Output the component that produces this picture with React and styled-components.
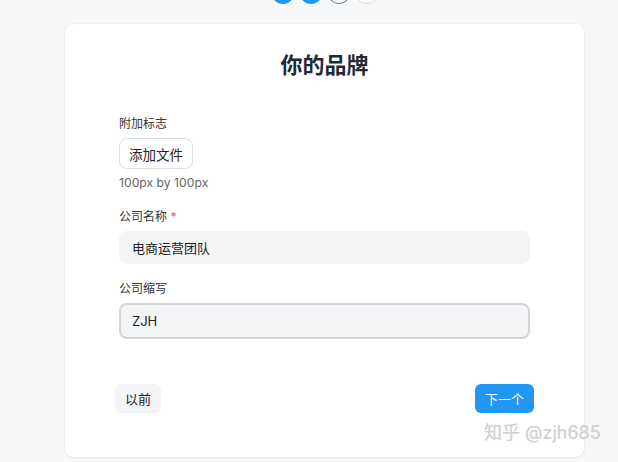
import React, {useState} from "react";
import styled, {createGlobalStyle} from 'styled-components'

const GlobalStyle = createGlobalStyle`
    html, body {
        margin: 0;
        background: #f7f8fa;
        font-family: Inter, "Noto Sans CJK SC", sans-serif;
        color: #1f2937;
        overflow: hidden;
    }
`;

const steps = ['done', 'done', 'current', 'todo'];

export default function App() {
    const [company, setCompany] = useState("电商运营团队");
    const [short, setShort] = useState("ZJH");

    return <Page>
        <GlobalStyle/>
        <Stepper>
            {steps.map((s, i) => <Dot key={i} state={s}/>)}
        </Stepper>
        <Card>
            <Title>你的品牌</Title>
            <Form>
                <Field>
                    <Label>附加标志</Label>
                    <FileButton>添加文件</FileButton>
                    <Hint>100px by 100px</Hint>
                </Field>
                <Field>
                    <Label>公司名称 <Required>*</Required></Label>
                    <Input value={company} onChange={e => setCompany(e.target.value)}/>
                </Field>
                <Field>
                    <Label>公司缩写</Label>
                    <Input focused value={short} onChange={e => setShort(e.target.value)}/>
                </Field>
            </Form>
            <Footer>
                <NavButton>以前</NavButton>
                <NavButton primary>下一个</NavButton>
            </Footer>
        </Card>
        <Watermark>知乎 @zjh685</Watermark>
    </Page>
}

const Page = styled.div`
    position: relative;
    display: flow-root;
    width: 618px;
    height: 462px;
`;

const Stepper = styled.div`
    display: flex;
    justify-content: center;
    gap: 4px;
    width: 519px;
    margin: -20px 0 0 65px;
`;

const Dot = styled.div`
    width: 24px;
    height: 24px;
    box-sizing: border-box;
    border-radius: 50%;
    background: ${p => p.state === 'done' ? '#2196f3' : '#fff'};
    border: 1px solid ${p => p.state === 'done' ? '#2196f3' : p.state === 'current' ? '#64748b' : '#d8dbe0'};
`;

const Card = styled.div`
    width: 519px;
    box-sizing: border-box;
    margin: 20px 0 0 65px;
    padding: 26px 50px 44px;
    background: #fff;
    border-radius: 8px;
    box-shadow: 0 0 3px rgba(0, 0, 0, 0.08), 0 1px 2px rgba(0, 0, 0, 0.05);
`;

const Title = styled.h1`
    margin: 0;
    text-align: center;
    font-size: 22px;
    line-height: 30px;
    font-weight: 700;
    color: #1f2937;
`;

const Form = styled.div`
    display: flex;
    flex-direction: column;
    gap: 16px;
    margin: 35px 4px 0;
`;

const Field = styled.div`
    display: flex;
    flex-direction: column;
    align-items: flex-start;
    gap: 5px;
`;

const Label = styled.label`
    font-size: 12px;
    line-height: 18px;
    color: #333;
`;

const Required = styled.span`
    color: #e35d5d;
`;

const FileButton = styled.button`
    height: 31px;
    padding: 0 9px;
    font-family: inherit;
    font-size: 13.5px;
    color: #222;
    background: #fff;
    border: 1px solid #dcdfe4;
    border-radius: 8px;
`;

const Hint = styled.div`
    font-size: 12.2px;
    line-height: 18px;
    color: #666;
`;

const Input = styled.input`
    align-self: stretch;
    box-sizing: border-box;
    height: ${p => p.focused ? '36px' : '33px'};
    padding: 0 ${p => p.focused ? '11px' : '13px'};
    font-family: inherit;
    font-size: 13px;
    color: #222;
    background: #f3f4f6;
    border: ${p => p.focused ? '2px solid #d4d6da' : 'none'};
    border-radius: 8px;
    outline: none;
`;

const Footer = styled.div`
    display: flex;
    justify-content: space-between;
    margin-top: 45px;
`;

const NavButton = styled.button`
    height: 29px;
    padding: 0 10px;
    font-family: inherit;
    font-size: 13px;
    color: ${p => p.primary ? '#fff' : '#222'};
    background: ${p => p.primary ? '#2196f3' : '#f3f4f6'};
    border: none;
    border-radius: 6px;
`;

const Watermark = styled.div`
    position: absolute;
    left: 484px;
    top: 421px;
    font-size: 18px;
    line-height: 24px;
    color: #d2d2d2;
    text-shadow: 0 0 1px rgba(0, 0, 0, 0.12);
`;
